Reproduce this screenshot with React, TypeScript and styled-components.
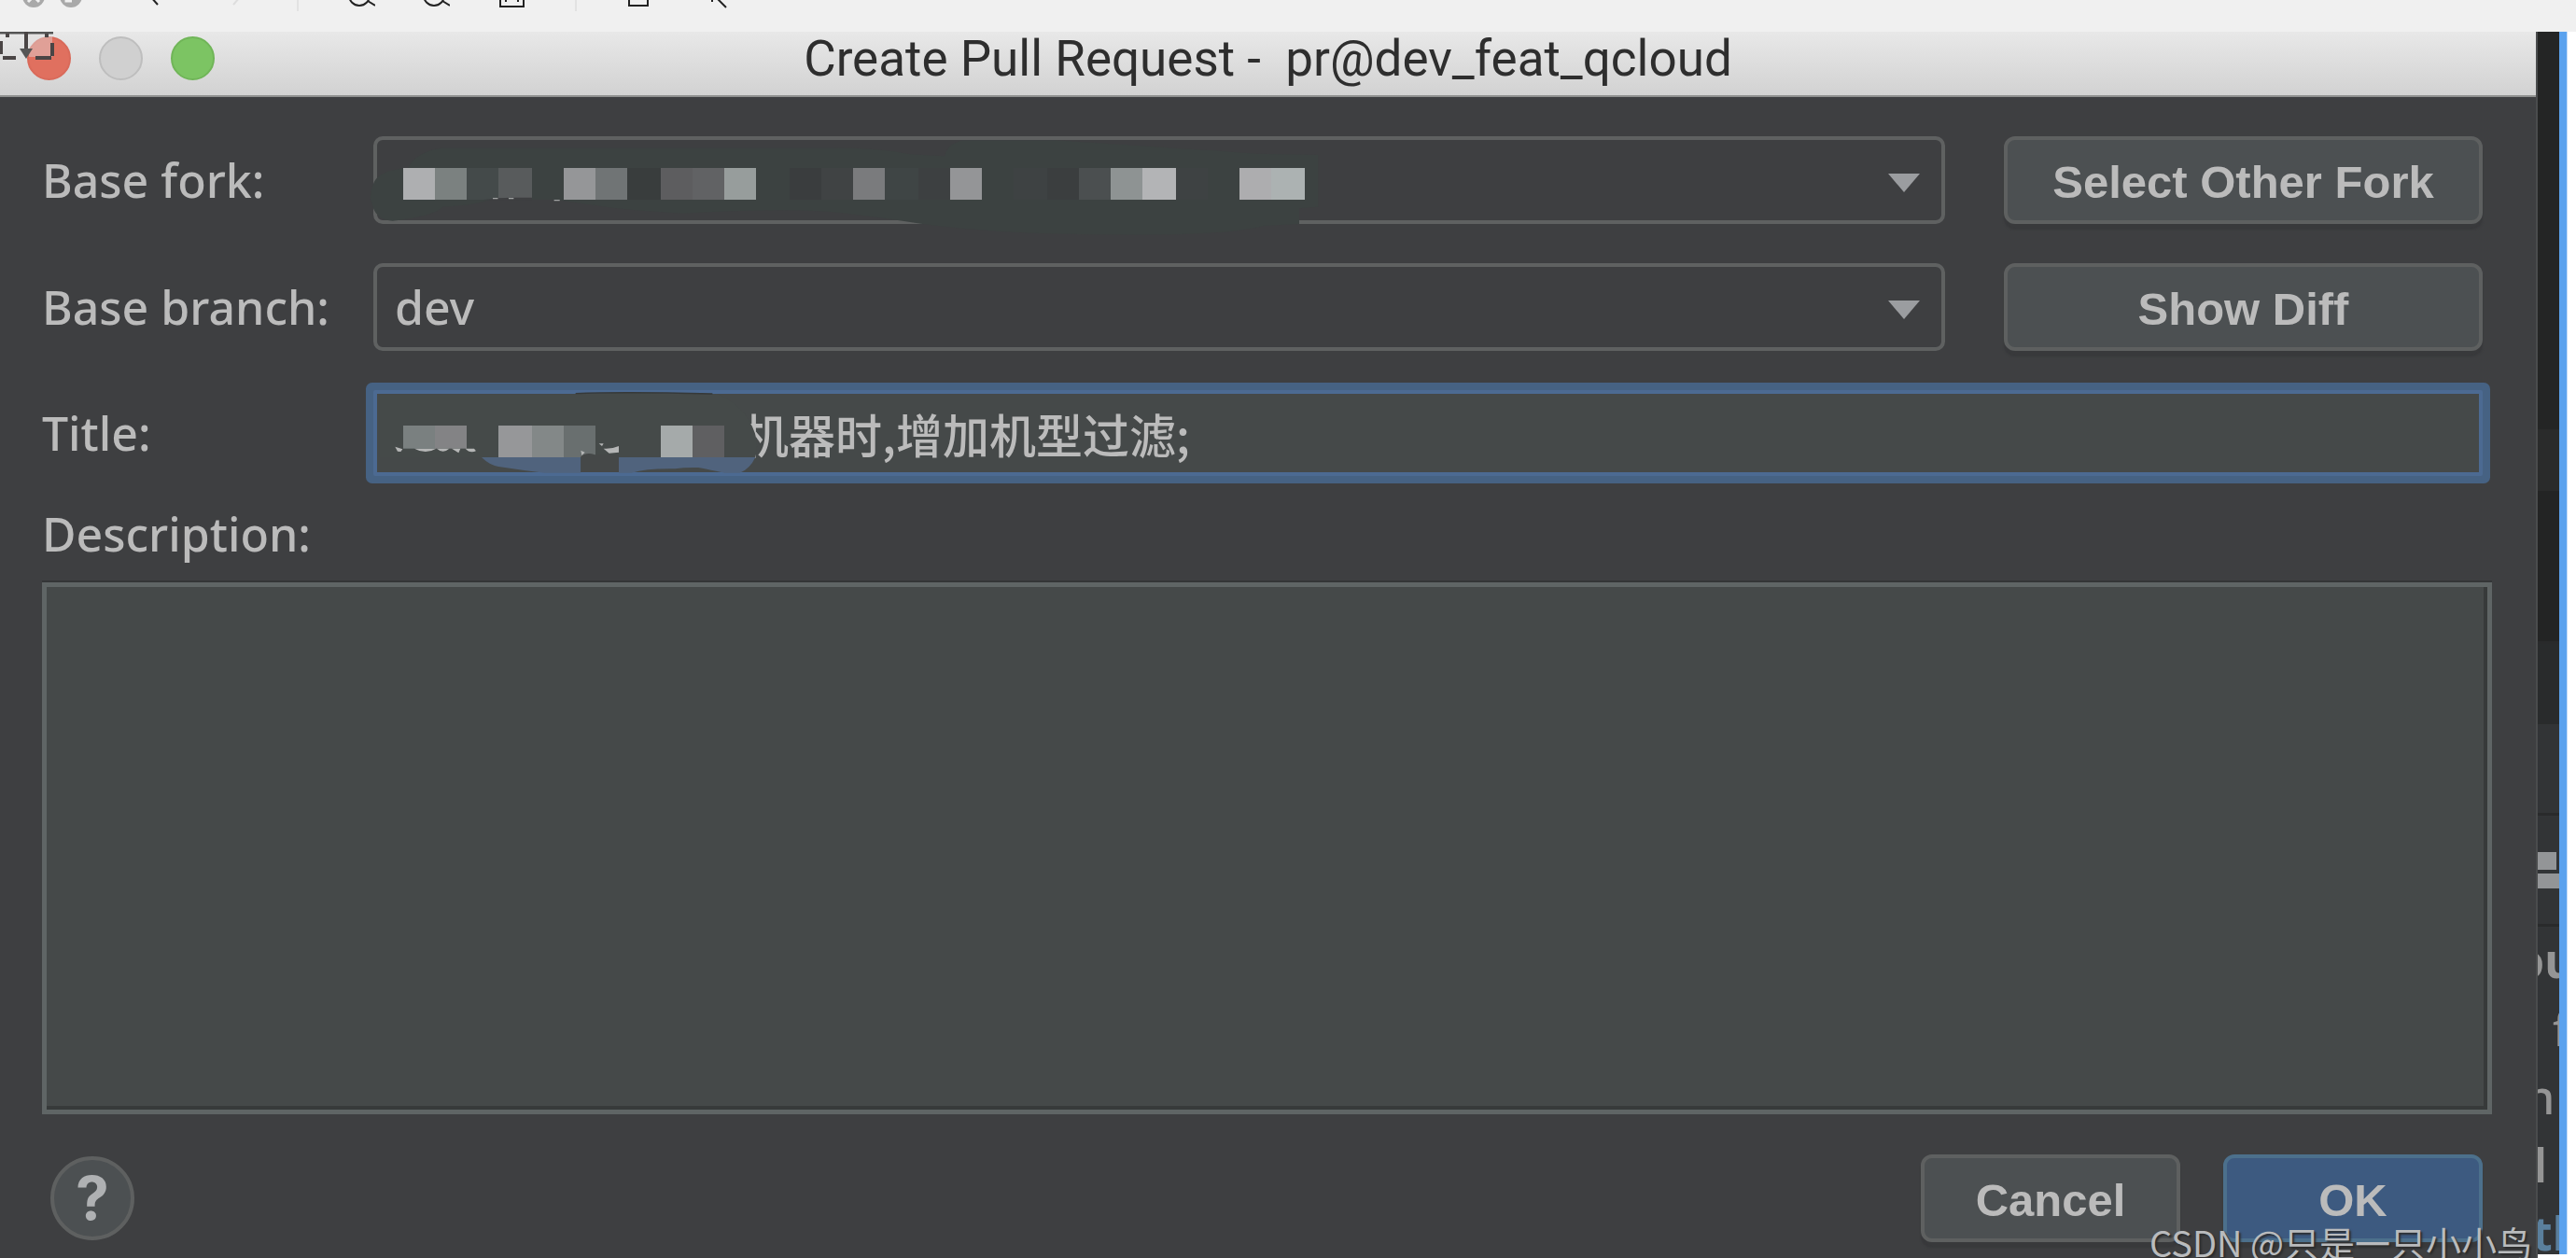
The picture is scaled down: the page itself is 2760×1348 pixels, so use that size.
import React from "react";
import styled, { createGlobalStyle } from "styled-components";

const GlobalStyle = createGlobalStyle`
  *, *::before, *::after { box-sizing: border-box; }
  body { margin: 0; background: #ffffff; }
  button, input, select, textarea { margin: 0; font: inherit; color: inherit; outline: none; }
`;

const uiFont = `"Noto Sans", "Open Sans", "Noto Sans CJK SC", sans-serif`;

const Page = styled.div`
  position: relative;
  display: flex;
  flex-direction: column;
  height: 100vh;
  overflow: hidden;
  font-family: ${uiFont};
  font-size: 50px;
  font-weight: 500;
  line-height: 56px;
  color: #bbbbbb;
`;

/* ---------- clipped host toolbar ---------- */

const Toolbar = styled.div`
  display: flex;
  flex: none;
  height: 34px;
  padding-left: 24px;
  background: #f0f0f0;
`;

const ToolButton = styled.button<{ $gap?: number }>`
  flex: none;
  width: 32px;
  height: 34px;
  margin-left: ${(p) => p.$gap ?? 0}px;
  padding: 0;
  border: 0;
  background: none;
  svg { display: block; }
`;

const ToolDivider = styled.span<{ $gap: number }>`
  flex: none;
  width: 2px;
  height: 12px;
  margin-left: ${(p) => p.$gap}px;
  background: #e2e2e2;
`;

const ToolSvg = ({ children }: { children: React.ReactNode }) => (
  <svg width="32" height="34" viewBox="0 0 32 34" fill="none" stroke="#222" strokeWidth="2">
    {children}
  </svg>
);

/* ---------- window frame ---------- */

const Desktop = styled.div`
  display: flex;
  flex: 1;
  min-height: 0;
`;

const Dialog = styled.section`
  display: flex;
  flex: 1;
  flex-direction: column;
  min-width: 0;
  border-right: 2px solid #4a4c4d;
  background: #3e3f41;
`;

const TitleBar = styled.header`
  position: relative;
  display: flex;
  flex: none;
  align-items: center;
  height: 70px;
  padding: 0 29px 11px;
  border-bottom: 2px solid #8f908f;
  background: linear-gradient(#e8e8e8, #d2d2d2);
`;

const Lights = styled.div`
  display: flex;
  flex: 1;
  gap: 30px;
`;

const Light = styled.button<{ $fill: string; $edge: string }>`
  width: 47px;
  height: 47px;
  padding: 0;
  border: 2px solid ${(p) => p.$edge};
  border-radius: 50%;
  background: ${(p) => p.$fill};
`;

const DialogTitle = styled.h1`
  margin: 0;
  font: 400 53px/56px Roboto, sans-serif;
  color: #2e2e2e;
  white-space: pre;
`;

const TitleBalance = styled.div`
  flex: 1;
`;

const DragMark = styled.svg`
  position: absolute;
  top: 0;
  left: 0;
`;

/* ---------- form ---------- */

const Form = styled.form`
  display: flex;
  flex: 1;
  flex-direction: column;
  min-height: 0;
  padding: 42px 47px 17px 45px;
`;

const Fields = styled.div`
  display: grid;
  grid-template-columns: 355px minmax(0, 1fr) 513px;
  row-gap: 42px;
  align-items: center;
  margin-right: 10px;
`;

const Label = styled.label``;

const Combo = styled.div`
  position: relative;
  margin-right: 63px;
`;

const Select = styled.select`
  display: block;
  width: 100%;
  height: 94px;
  padding: 0 80px 0 19px;
  border: 4px solid #5f6161;
  border-radius: 10px;
  background: #3e3f41;
  appearance: none;
`;

const Arrow = styled.svg`
  position: absolute;
  top: 40px;
  right: 27px;
  pointer-events: none;
`;

const Redaction = styled.svg`
  position: absolute;
  left: -20px;
  pointer-events: none;
`;

const Button = styled.button<{ $primary?: boolean }>`
  height: 94px;
  padding: 4px 0 0;
  border: 4px solid ${(p) => (p.$primary ? "#4c708c" : "#5e6060")};
  border-radius: 12px;
  background: ${(p) => (p.$primary ? "#3d5a80" : "#4c5052")};
  box-shadow: 0 6px 2px #38393b;
  font: 700 49px/56px "Liberation Sans", Arial, sans-serif;
  color: #bbbbbb;
`;

const TitleField = styled.div`
  position: relative;
  grid-column: 2 / 4;
`;

const TitleInput = styled.input`
  display: block;
  width: 100%;
  height: 92px;
  padding: 0 16px 0 391px;
  border: 4px solid #4c6a92;
  border-radius: 2px;
  background: #454949;
  box-shadow: 0 0 0 8px #466283;
  font-family: "Noto Sans CJK SC", sans-serif;
`;

const DescriptionLabel = styled.label`
  margin-top: 34px;
`;

const Description = styled.textarea`
  flex: 1;
  min-height: 120px;
  margin-top: 24px;
  padding: 16px;
  border: 5px solid #5f6565;
  background: #454949;
  box-shadow: 0 -2px 0 #343637, inset -4px -4px 0 #373a3a;
  resize: none;
`;

const Footer = styled.footer`
  display: flex;
  align-items: center;
  gap: 46px;
  margin: 43px 10px 0 9px;
`;

const HelpButton = styled.button`
  width: 90px;
  height: 90px;
  margin-right: auto;
  padding: 0;
  border: 4px solid #5e6060;
  border-radius: 50%;
  background: #4c5052;
  font: 700 64px/80px Inter, sans-serif;
  color: #afb1b3;
`;

const FooterButton = styled(Button)`
  width: 278px;
`;

/* ---------- editor strip behind the dialog ---------- */

const Behind = styled.aside`
  display: flex;
  flex: none;
  flex-direction: column;
  width: 23px;
  margin-bottom: 4px;
  overflow: hidden;
`;

const Band = styled.div<{ $h: number; $bg: string; $line?: boolean }>`
  flex: none;
  height: ${(p) => p.$h}px;
  border-bottom: ${(p) => (p.$line ? "3px solid #292a2b" : "0")};
  background: ${(p) => p.$bg};
`;

const IconBand = styled(Band)`
  display: flex;
  flex-direction: column;
  justify-content: center;
  gap: 4px;
`;

const IconBar = styled.span<{ $w: number; $h: number }>`
  width: ${(p) => p.$w}px;
  height: ${(p) => p.$h}px;
  background: #939597;
`;

const CodeLine = styled.div<{ $shift: number; $bold?: boolean; $color?: string }>`
  flex: none;
  height: 73px;
  overflow: hidden;
  background: #323436;
  font-weight: ${(p) => (p.$bold ? 700 : 500)};
  line-height: 73px;
  text-indent: ${(p) => p.$shift}px;
  white-space: nowrap;
  color: ${(p) => p.$color ?? "#959595"};
`;

const Selection = styled.div`
  flex: none;
  width: 9px;
  margin: 0 9px 4px 0;
  border-right: 1px solid #c4dcf8;
  background: #5ba2ee;
`;

const Watermark = styled.div`
  position: absolute;
  right: 47px;
  bottom: 0;
  font: 400 38px/34px "Noto Sans CJK SC", sans-serif;
  color: #b9bbbd;
  text-shadow: 2px 2px 2px #2b2b2b;
  white-space: nowrap;
`;

type Block = [x: number, w: number, fill: string];

const forkBlocks: Block[] = [
  [77, 50, "#aeafb1"],
  [127, 51, "#7b8180"],
  [178, 50, "#444a4a"],
  [228, 53, "#585b5c"],
  [331, 51, "#959698"],
  [382, 50, "#707475"],
  [432, 53, "#393d3d"],
  [485, 50, "#5d5d5f"],
  [535, 51, "#616264"],
  [586, 50, "#979d9c"],
  [690, 50, "#3a3d3e"],
  [740, 50, "#404344"],
  [790, 50, "#7a7b7d"],
  [840, 53, "#3f4545"],
  [893, 51, "#3d4041"],
  [944, 50, "#949597"],
  [1045, 53, "#3e4243"],
  [1098, 50, "#3b3e3f"],
  [1148, 50, "#4b4f50"],
  [1198, 50, "#8e9393"],
  [1248, 54, "#b3b4b6"],
  [1302, 50, "#3e4243"],
  [1402, 51, "#adadaf"],
  [1453, 53, "#acb2b2"],
];

const titleBlocks: Block[] = [
  [462, 108, "#969799"],
  [570, 102, "#838888"],
  [672, 102, "#696f6f"],
  [984, 102, "#a5aaaa"],
  [1086, 102, "#5f5f61"],
];

const ForkRedaction = () => (
  <Redaction style={{ top: -16 }} width="1060" height="130" viewBox="0 0 1568 390" preserveAspectRatio="none" aria-hidden>
    <path
      fill="#3c4241"
      d="M25 250 Q26 200 36 180 Q50 155 85 150 Q95 100 140 85 H760 Q830 86 880 106 L935 112 Q940 70 965 61 H1110 Q1290 85 1430 104 L1527 108 V275 L1497 280 V330 L1440 336 Q1380 370 1180 364 Q1020 362 900 330 Q840 310 780 296 Q700 275 520 296 Q430 285 400 276 L320 252 H215 Q190 270 140 275 Q125 305 60 320 Q38 318 30 282Z"
    />
    {forkBlocks.map(([x, w, fill]) => (
      <rect key={x} x={x} y="150" width={w} height="102" fill={fill} shapeRendering="crispEdges" />
    ))}
    <path fill="#3e3f41" d="M205 252 Q230 244 255 245 H281 V254Z" />
    <path stroke="#a0a2a2" strokeWidth="4" d="M219 248 h8 M244 248 h8 M316 254 h9" />
  </Redaction>
);

const TitleRedaction = () => (
  <Redaction style={{ top: -18 }} width="480" height="130" viewBox="0 0 1440 390" preserveAspectRatio="none" aria-hidden>
    <path fill="#454a49" d="M80 68 H690 Q860 56 1170 68 Q1240 100 1266 150 Q1305 210 1288 270 H80Z" />
    <path stroke="#363939" strokeWidth="4" fill="none" d="M710 65 Q860 59 1150 66" />
    <path fill="#50637d" d="M408 270 H727 V320 H610 Q540 312 462 300 Q432 294 408 270Z" />
    <path fill="#50637d" d="M849 270 H1288 Q1270 308 1238 320 H1190 Q1150 312 1105 303 Q1060 302 1030 307 Q940 305 890 320 H849Z" />
    <rect x="156" y="168" width="102" height="74" fill="#7a8080" />
    <rect x="258" y="168" width="102" height="74" fill="#838385" />
    {titleBlocks.map(([x, w, fill]) => (
      <rect key={x} x={x} y="168" width={w} height="102" fill={fill} shapeRendering="crispEdges" />
    ))}
    <path fill="#454848" d="M727 268 Q745 252 772 262 H849 V318 H727Z" />
    <path
      fill="#b5b6b6"
      d="M130 236 L154 244 L148 252 L138 251Z M192 242 H262 Q228 262 192 242Z M264 242 H304 Q284 260 264 242Z M312 242 H340 L334 256Z M356 242 H384 L390 250 Q370 258 356 242Z M727 248 L740 254 L730 264Z M785 226 L800 226 L795 234Z M800 242 Q826 244 849 234 V254 L818 257Z"
    />
  </Redaction>
);

const ComboArrow = () => (
  <Arrow width="34" height="20" viewBox="0 0 34 20" aria-hidden>
    <path d="M0 0H34L17 20Z" fill="#9b9da0" />
  </Arrow>
);

export default function App() {
  return (
    <Page>
      <GlobalStyle />
      <Toolbar>
        <ToolButton aria-label="Close">
          <ToolSvg>
            <circle cx="12" cy="-4" r="12" fill="#a9a9a9" stroke="none" />
            <path d="M6 2 12 -4 18 2" stroke="#f0f0f0" strokeWidth="3" />
          </ToolSvg>
        </ToolButton>
        <ToolButton aria-label="Expand" $gap={8}>
          <ToolSvg>
            <circle cx="12" cy="-4" r="12" fill="#a9a9a9" stroke="none" />
            <path d="M7 -4V1H13" stroke="#f0f0f0" strokeWidth="3" />
          </ToolSvg>
        </ToolButton>
        <ToolButton aria-label="Back" $gap={60}>
          <ToolSvg>
            <path d="M5 -4 13 5" />
          </ToolSvg>
        </ToolButton>
        <ToolButton aria-label="Forward" $gap={60}>
          <ToolSvg>
            <path d="M9 -3 2 5" stroke="#dddddd" />
          </ToolSvg>
        </ToolButton>
        <ToolDivider $gap={38} />
        <ToolButton aria-label="Zoom out" $gap={50}>
          <ToolSvg>
            <circle cx="15" cy="-5" r="11" />
            <path d="M24 1 32 6" />
          </ToolSvg>
        </ToolButton>
        <ToolButton aria-label="Zoom in" $gap={48}>
          <ToolSvg>
            <circle cx="15" cy="-5" r="11" />
            <path d="M24 1 32 6" />
          </ToolSvg>
        </ToolButton>
        <ToolButton aria-label="Actual size" $gap={51}>
          <ToolSvg>
            <path d="M3 -4V7H28V-4M9 -2V2M22 -2V2" />
          </ToolSvg>
        </ToolButton>
        <ToolDivider $gap={51} />
        <ToolButton aria-label="Page" $gap={52}>
          <ToolSvg>
            <path d="M4 -4V6H24V-4" />
          </ToolSvg>
        </ToolButton>
        <ToolButton aria-label="Pointer" $gap={58}>
          <ToolSvg>
            <path d="M3 -2V2M8 -2 18 8" />
          </ToolSvg>
        </ToolButton>
      </Toolbar>

      <Desktop>
        <Dialog aria-labelledby="dialog-title">
          <TitleBar>
            <Lights>
              <Light $fill="#e0705f" $edge="#d96a5a" aria-label="Close window" />
              <Light $fill="#d0d0d0" $edge="#bebebe" aria-label="Minimize window" />
              <Light $fill="#7cc463" $edge="#70b558" aria-label="Zoom window" />
            </Lights>
            <DialogTitle id="dialog-title">{"Create Pull Request -  pr@dev_feat_qcloud"}</DialogTitle>
            <TitleBalance />
            <DragMark width="64" height="34" viewBox="0 0 64 34" fill="none" aria-hidden>
              <path d="M31 0H56V27H31Z" fill="#e0dcdc" fillOpacity=".45" />
              <path d="M0 1H57" stroke="#555" strokeWidth="3" />
              <path d="M28 0V20M1 10V24M3 28H17M38 28H55M56 12V26M6 4H10M48 4H52" stroke="#4a4545" strokeWidth="4" />
              <path d="M21 18H35L28 29Z" fill="#555" />
            </DragMark>
          </TitleBar>

          <Form onSubmit={(e) => e.preventDefault()}>
            <Fields>
              <Label htmlFor="base-fork">Base fork:</Label>
              <Combo>
                <Select id="base-fork" defaultValue="">
                  <option value="" />
                </Select>
                <ForkRedaction />
                <ComboArrow />
              </Combo>
              <Button type="button">Select Other Fork</Button>

              <Label htmlFor="base-branch">Base branch:</Label>
              <Combo>
                <Select id="base-branch" defaultValue="dev">
                  <option value="dev">dev</option>
                </Select>
                <ComboArrow />
              </Combo>
              <Button type="button">Show Diff</Button>

              <Label htmlFor="pr-title">Title:</Label>
              <TitleField>
                <TitleInput id="pr-title" type="text" defaultValue="机器时,增加机型过滤;" />
                <TitleRedaction />
              </TitleField>
            </Fields>

            <DescriptionLabel htmlFor="pr-description">Description:</DescriptionLabel>
            <Description id="pr-description" />

            <Footer>
              <HelpButton type="button" aria-label="Help">?</HelpButton>
              <FooterButton type="button">Cancel</FooterButton>
              <FooterButton type="submit" $primary>OK</FooterButton>
            </Footer>
          </Form>
        </Dialog>

        <Behind aria-hidden>
          <Band $h={426} $bg="#242525" />
          <Band $h={66} $bg="#2a2b2b" />
          <Band $h={164} $bg="#232424" $line />
          <Band $h={86} $bg="#292b2c" />
          <Band $h={98} $bg="#323436" $line />
          <IconBand $h={119} $bg="#323436" $line>
            <IconBar $w={20} $h={19} />
            <IconBar $w={23} $h={16} />
          </IconBand>
          <CodeLine $shift={-24} $bold>ou</CodeLine>
          <CodeLine $shift={16}>f</CodeLine>
          <CodeLine $shift={-13}>n</CodeLine>
          <CodeLine $shift={-5} $bold>l</CodeLine>
          <CodeLine $shift={-6} $bold $color="#5a7f9c">tl</CodeLine>
        </Behind>
        <Selection />
      </Desktop>
      <Watermark>CSDN @只是一只小小鸟</Watermark>
    </Page>
  );
}
